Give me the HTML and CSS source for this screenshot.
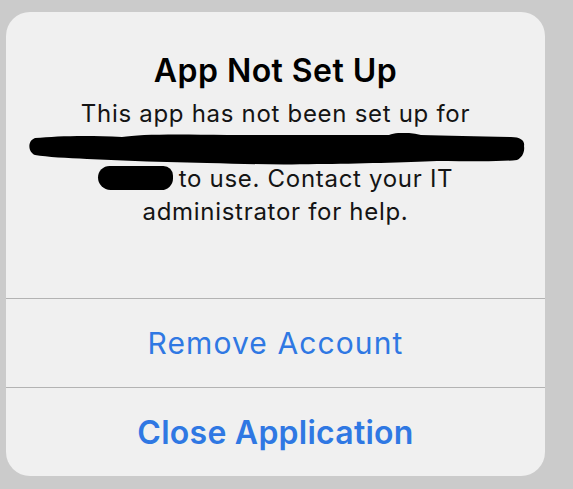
FILE: index.html
```html
<!DOCTYPE html>
<html>
<head>
<meta charset="utf-8">
<link rel="stylesheet" href="styles.css">
</head>
<body>
<div class="alert">
  <div class="content">
    <div class="title">App Not Set Up</div>
    <div class="message">
      <div class="line">This app has not been set up for</div>
      <div class="line redact-line">
        <svg class="scribble-wide" width="498" height="32" viewBox="0 0 498 32">
          <path d="M8 5 C30 3 60 2 95 4 C112 1 150 1 200 2 C260 2 320 2 362 2 C370 -1 382 -1 394 2 C420 3 450 3 484 4 C494 4 498 8 497 13 C498 19 495 25 490 27 C470 29 440 28 410 28 C380 29 330 31 290 31 C250 32 220 31 180 30 C140 29 100 28 60 26 C40 25 20 24 8 22 C1 19 0 8 8 5 Z" fill="#000"/>
        </svg>
      </div>
      <div class="line"><span class="scribble-small"></span>to use. Contact your IT</div>
      <div class="line">administrator for help.</div>
    </div>
  </div>
  <div class="action">Remove Account</div>
  <div class="action bold">Close Application</div>
</div>
</body>
</html>
```
FILE: styles.css
```css
html, body {
  margin: 0;
  padding: 0;
  background: #cbcbcb;
  width: 573px;
  height: 489px;
  overflow: hidden;
}
.alert {
  margin: 12px 0 0 6px;
  width: 539px;
  height: 464px;
  background: #f0f0f0;
  border-radius: 24px;
  font-family: Inter, "Liberation Sans", sans-serif;
  display: flex;
  flex-direction: column;
  overflow: hidden;
}
.content {
  height: 288px;
  display: flex;
  flex-direction: column;
  align-items: center;
  padding-top: 40px;
  box-sizing: border-box;
  border-bottom: 1px solid #b3b3b3;
}
.title {
  font-size: 32px;
  font-weight: 600;
  color: #000;
  line-height: 38px;
  letter-spacing: 0.45px;
}
.message {
  margin-top: 8px;
  display: flex;
  flex-direction: column;
  align-items: center;
}
.line {
  font-size: 24px;
  line-height: 32.5px;
  height: 32.5px;
  color: #141414;
  letter-spacing: 0.7px;
  display: flex;
  align-items: center;
}
.scribble-wide {
  display: block;
  margin-top: 5px;
}
.scribble-small {
  display: inline-block;
  width: 75px;
  height: 24px;
  background: #000;
  border-radius: 12px 10px 12px 13px;
  margin-right: 6px;
  position: relative;
  top: -1px;
}
.action {
  height: 88px;
  display: flex;
  align-items: center;
  justify-content: center;
  font-size: 30px;
  color: #2f78e3;
  letter-spacing: 1.1px;
}
.action + .action {
  border-top: 1px solid #b3b3b3;
}
.action.bold {
  font-weight: 600;
  font-size: 32px;
  letter-spacing: 0.25px;
}
```
